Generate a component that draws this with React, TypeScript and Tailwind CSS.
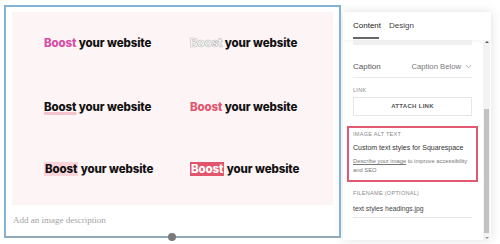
import React from "react";

const Heading = ({ variant }: { variant: number }) => {
  let boost: React.ReactNode = null;
  switch (variant) {
    case 1:
      boost = <span className="text-[#d54ea6]">Boost</span>;
      break;
    case 2:
      boost = (
        <span className="text-white [-webkit-text-stroke:0.6px_#b9b9b9]">Boost</span>
      );
      break;
    case 3:
      boost = (
        <span className="underline decoration-[#f4c3cb] decoration-[3px] underline-offset-[1px]">
          Boost
        </span>
      );
      break;
    case 4:
      boost = <span className="text-[#e2566d]">Boost</span>;
      break;
    case 5:
      boost = <span className="bg-[#f9d5da] px-[1px]">Boost</span>;
      break;
    case 6:
      boost = <span className="bg-[#e2566d] text-white px-[1px]">Boost</span>;
      break;
  }
  return (
    <div className="flex items-center">
      <span className="font-['Inter',sans-serif] font-extrabold text-[11.5px] tracking-[-0.1px] text-[#111] whitespace-nowrap">
        {boost} your website
      </span>
    </div>
  );
};

const Label = ({ children }: { children: React.ReactNode }) => (
  <div className="text-[5.5px] leading-[7px] tracking-[0.3px] uppercase text-[#8a8a8a]">{children}</div>
);

const App = () => {
  return (
    <div className="w-[500px] h-[244px] bg-white flex font-['Liberation_Sans',Arial,sans-serif] overflow-hidden">
      {/* image block */}
      <div className="ml-[4px] mt-[5px] w-[337px] h-[233px] border-2 border-[#84b4d4] border-b-[#8fa9ba] px-[6px] pt-[5px] relative">
        <div className="h-[193px] bg-[#fdf4f5] grid grid-cols-[146px_1fr] grid-rows-[64px_63px_61px] pl-[32px]">
          {[1, 2, 3, 4, 5, 6].map((v) => (
            <Heading key={v} variant={v} />
          ))}
        </div>
        <div className="pt-[9px] pl-[1px] font-['Liberation_Serif',serif] text-[9px] text-[#a3a3a3]">
          Add an image description
        </div>
        <div className="absolute left-[162px] bottom-[-5px] w-[8px] h-[8px] rounded-full bg-[#7a7a7a]" />
      </div>

      {/* settings panel */}
      <div className="ml-[2px] mt-[12px] w-[148px] h-[228px] bg-white shadow-[0_0_10px_rgba(0,0,0,0.12)] flex flex-col">
        <div className="h-[28px] flex items-start pl-[10px] gap-[8px] text-[8px] text-[#222] pt-[8px] shadow-[0_1px_3px_rgba(0,0,0,0.05)]">
          <div className="flex flex-col">
            <span>Content</span>
            <div className="mt-[5px] h-[2px] bg-[#666] w-[26px]" />
          </div>
          <span className="text-[#444]">Design</span>
        </div>
        <div className="flex flex-1 min-h-0">
          <div className="flex-1 pl-[10px] pr-[11px]">
            <div className="h-[5px] bg-[#efefef]" />
            <div className="flex items-center justify-between mt-[16px] text-[8px] text-[#555]">
              <span>Caption</span>
              <span className="flex items-center gap-[4px] text-[#777] text-[7.7px]">
                Caption Below
                <svg width="7" height="5" viewBox="0 0 7 5" fill="none">
                  <path d="M0.8 1 L3.5 3.8 L6.2 1" stroke="#999" strokeWidth="0.8" />
                </svg>
              </span>
            </div>
            <div className="mt-[4px] h-px bg-[#eaeaea]" />
            <div className="mt-[9px]">
              <Label>Link</Label>
            </div>
            <div className="mt-[3px] h-[19px] border border-[#e6e6e6] flex items-center justify-center text-[6px] font-bold tracking-[0.3px] text-[#555]">
              ATTACH LINK
            </div>
            <div className="mt-[10px] -mx-[6px] border-2 border-[#e25a72] px-[4px] pt-[3px] pb-[5px]">
              <Label>Image Alt Text</Label>
              <div className="mt-[5px] text-[7px] leading-[9px] text-[#333] whitespace-nowrap">Custom text styles for Squarespace</div>
              <div className="mt-[5px] text-[5.8px] leading-[9px] text-[#777]">
                <div className="flex gap-[1.5px] whitespace-nowrap">
                  <span className="underline underline-offset-[1px]">Describe your image</span>
                  <span>to improve accessibility</span>
                </div>
                <div>and SEO</div>
              </div>
            </div>
            <div className="mt-[8px]">
              <Label>Filename (Optional)</Label>
            </div>
            <div className="mt-[7px] text-[6.8px] leading-[9px] text-[#444]">text styles headings.jpg</div>
            <div className="mt-[4px] h-px bg-[#e6e6e6]" />
          </div>
          <div className="w-[7px] mr-[1px] bg-[#f3f3f3] flex flex-col items-center">
            <div className="mt-[1px] w-0 h-0 border-l-[2px] border-r-[2px] border-b-[2px] border-l-transparent border-r-transparent border-b-[#555]" />
            <div className="mt-[66px] w-[5px] h-[124px] bg-[#c2c2c2]" />
            <div className="mt-auto mb-[1px] w-0 h-0 border-l-[2px] border-r-[2px] border-t-[2px] border-l-transparent border-r-transparent border-t-[#999]" />
          </div>
        </div>
      </div>
    </div>
  );
};

export default App;
